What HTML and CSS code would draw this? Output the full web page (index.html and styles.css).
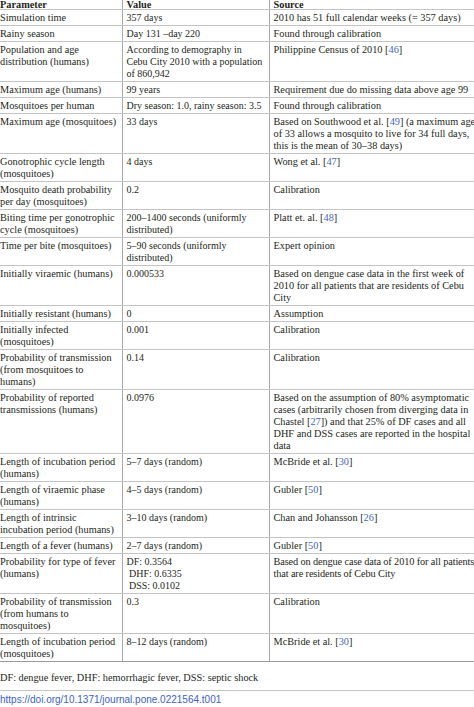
FILE: index.html
```html
<!DOCTYPE html>
<html>
<head>
<meta charset="utf-8">
<link rel="stylesheet" href="styles.css">
</head>
<body>
<table class="params">
<colgroup><col class="c1"><col class="c2"><col class="c3"></colgroup>
<thead>
<tr class="head"><th>Parameter</th><th>Value</th><th>Source</th></tr>
</thead>
<tbody>
<tr><td>Simulation time</td><td>357 days</td><td>2010 has 51 full calendar weeks (= 357 days)</td></tr>
<tr><td>Rainy season</td><td>Day 131 –day 220</td><td>Found through calibration</td></tr>
<tr><td>Population and age<br>distribution (humans)</td><td>According to demography in<br>Cebu City 2010 with a population<br>of 860,942</td><td>Philippine Census of 2010 [<a>46</a>]</td></tr>
<tr><td>Maximum age (humans)</td><td>99 years</td><td>Requirement due do missing data above age 99</td></tr>
<tr><td>Mosquitoes per human</td><td>Dry season: 1.0, rainy season: 3.5</td><td>Found through calibration</td></tr>
<tr><td>Maximum age (mosquitoes)</td><td>33 days</td><td>Based on Southwood et al. [<a>49</a>] (a maximum age<br>of 33 allows a mosquito to live for 34 full days,<br>this is the mean of 30–38 days)</td></tr>
<tr><td>Gonotrophic cycle length<br>(mosquitoes)</td><td>4 days</td><td>Wong et al. [<a>47</a>]</td></tr>
<tr><td>Mosquito death probability<br>per day (mosquitoes)</td><td>0.2</td><td>Calibration</td></tr>
<tr><td>Biting time per gonotrophic<br>cycle (mosquitoes)</td><td>200–1400 seconds (uniformly<br>distributed)</td><td>Platt et. al. [<a>48</a>]</td></tr>
<tr><td>Time per bite (mosquitoes)</td><td>5–90 seconds (uniformly<br>distributed)</td><td>Expert opinion</td></tr>
<tr><td>Initially viraemic (humans)</td><td>0.000533</td><td>Based on dengue case data in the first week of<br>2010 for all patients that are residents of Cebu<br>City</td></tr>
<tr><td>Initially resistant (humans)</td><td>0</td><td>Assumption</td></tr>
<tr><td>Initially infected<br>(mosquitoes)</td><td>0.001</td><td>Calibration</td></tr>
<tr><td>Probability of transmission<br>(from mosquitoes to<br>humans)</td><td>0.14</td><td>Calibration</td></tr>
<tr><td>Probability of reported<br>transmissions (humans)</td><td>0.0976</td><td>Based on the assumption of 80% asymptomatic<br>cases (arbitrarily chosen from diverging data in<br>Chastel [<a>27</a>]) and that 25% of DF cases and all<br>DHF and DSS cases are reported in the hospital<br>data</td></tr>
<tr><td>Length of incubation period<br>(humans)</td><td>5–7 days (random)</td><td>McBride et al. [<a>30</a>]</td></tr>
<tr><td>Length of viraemic phase<br>(humans)</td><td>4–5 days (random)</td><td>Gubler [<a>50</a>]</td></tr>
<tr><td>Length of intrinsic<br>incubation period (humans)</td><td>3–10 days (random)</td><td>Chan and Johansson [<a>26</a>]</td></tr>
<tr><td>Length of a fever (humans)</td><td>2–7 days (random)</td><td>Gubler [<a>50</a>]</td></tr>
<tr><td>Probability for type of fever<br>(humans)</td><td>DF: 0.3564<br>&nbsp;DHF: 0.6335<br>&nbsp;DSS: 0.0102</td><td class="tight">Based on dengue case data of 2010 for all patients<br>that are residents of Cebu City</td></tr>
<tr><td>Probability of transmission<br>(from humans to<br>mosquitoes)</td><td>0.3</td><td>Calibration</td></tr>
<tr><td>Length of incubation period<br>(mosquitoes)</td><td>8–12 days (random)</td><td>McBride et al. [<a>30</a>]</td></tr>
</tbody>
</table>
<p class="foot">DF: dengue fever, DHF: hemorrhagic fever, DSS: septic shock</p>
<p class="doi"><a>https://doi.org/10.1371/journal.pone.0221564.t001</a></p>
</body>
</html>
```
FILE: styles.css
```css
html, body {
  margin: 0;
  padding: 0;
  background: #fff;
}
body {
  width: 474px;
  overflow: hidden;
  font-family: "Liberation Serif", "Times New Roman", serif;
  font-size: 10.3px;
  color: #231f20;
}
.params {
  width: 474px;
  border-collapse: collapse;
  table-layout: fixed;
}
.c1 { width: 122px; }
.c2 { width: 147px; }
.c3 { width: 205px; }
.params th, .params td {
  text-align: left;
  vertical-align: top;
  white-space: nowrap;
  overflow: hidden;
  line-height: 12px;
  padding: 2px 0 1px 4px;
  border-bottom: 1px solid #c4c4c4;
}
.params td:nth-child(2) {
  font-size: 10px;
}
.params td.tight {
  letter-spacing: -0.12px;
}
.params th:first-child, .params td:first-child {
  padding-left: 0;
}
.params th + th, .params td + td {
  border-left: 1px solid #a9a9a9;
}
.params th {
  font-weight: bold;
  line-height: 9px;
  padding-top: 0;
  padding-bottom: 0;
}
.params tbody tr:last-child td {
  border-bottom: 1px solid #9a9a9a;
}
.params a {
  color: #3f66c6;
}
.foot {
  margin: 0;
  padding: 10px 0 6px 0;
  line-height: 12px;
  border-bottom: 1px solid #c4c4c4;
}
.doi {
  margin: 0;
  padding-top: 3px;
  font-family: "Liberation Sans", Arial, sans-serif;
  font-size: 10px;
  line-height: 12px;
}
.doi a {
  color: #3b5fc8;
}
```
